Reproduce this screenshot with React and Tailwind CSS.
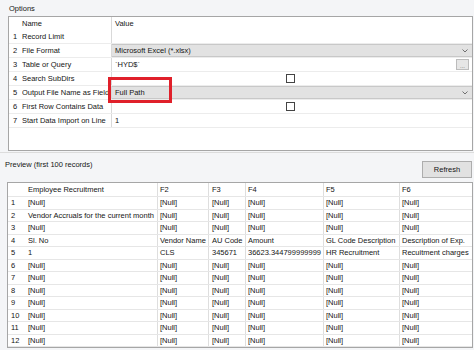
import React from "react";

const options = [
  { n: 1, name: "Record Limit", value: "" },
  { n: 2, name: "File Format", value: "Microsoft Excel (*.xlsx)", combo: true },
  { n: 3, name: "Table or Query", value: "`HYD$`", browse: true },
  { n: 4, name: "Search SubDirs", check: true },
  { n: 5, name: "Output File Name as Field", value: "Full Path", combo: true },
  { n: 6, name: "First Row Contains Data", check: true },
  { n: 7, name: "Start Data Import on Line", value: "1" },
];

const widths = ["w-[134px]", "w-[51px]", "w-[37px]", "w-[78px]", "w-[76px]", "w-[72px]"];
const pads = ["pl-[4px]", "pl-[2px]", "pl-[3px]", "pl-[2px]", "pl-[2px]", "pl-[2px]"];

const header = ["Employee Recruitment", "F2", "F3", "F4", "F5", "F6"];
const N = "[Null]";
const rows = [
  [N, N, N, N, N, N],
  ["Vendor Accruals for the current month", N, N, N, N, N],
  [N, N, N, N, N, N],
  ["Sl. No", "Vendor Name", "AU Code", "Amount", "GL Code Description", "Description of Exp."],
  ["1", "CLS", "345671", "36623.344799999999", "HR Recruitment", "Recuitment charges"],
  [N, N, N, N, N, N],
  [N, N, N, N, N, N],
  [N, N, N, N, N, N],
  [N, N, N, N, N, N],
  [N, N, N, N, N, N],
  [N, N, N, N, N, N],
  [N, N, N, N, N, N],
];

const Chevron = () => (
  <svg width="6" height="4" viewBox="0 0 6 4" className="mr-[4px]">
    <polyline points="0.5,0.5 3,3 5.5,0.5" fill="none" stroke="#707070" strokeWidth="1" />
  </svg>
);

const OptionRow = ({ o }) => (
  <div className="flex h-[14px] border-b border-[#ececec]">
    <div className="w-[13px] pl-[4px] flex items-center">{o.n}</div>
    <div className="w-[90px] flex items-center border-r border-[#d9d9d9] whitespace-nowrap overflow-hidden">
      {o.name}
    </div>
    {o.combo ? (
      <div className="flex-1 flex items-center justify-between bg-[#e2e2e2] border-y border-[#c8c8c8] pl-[3px]">
        <span>{o.value}</span>
        <Chevron />
      </div>
    ) : o.check ? (
      <div className="flex-1 flex items-center pl-[174px]">
        <div className="w-[9px] h-[9px] border border-[#444] bg-white" />
      </div>
    ) : (
      <div className="flex-1 flex items-center justify-between pl-[3px]">
        <span>{o.value}</span>
        {o.browse && (
          <div className="w-[13px] h-[11px] mr-[3px] bg-[#e6e6e6] border border-[#bcbcbc] flex items-end justify-center text-[6px] leading-[6px] text-[#666]">
            ...
          </div>
        )}
      </div>
    )}
  </div>
);

const GridRow = ({ n, cells, head }) => (
  <div className={`flex ${head ? "h-[14px]" : "h-[12.5px]"} border-b border-[#e6e6e6]`}>
    <div className="w-[16px] pl-[3px] flex items-center">{n}</div>
    {cells.map((c, i) => (
      <div
        key={i}
        className={`${widths[i]} ${pads[i]} flex items-center whitespace-nowrap overflow-hidden ${
          i < 5 ? "border-r border-[#dedede]" : ""
        }`}
      >
        {c}
      </div>
    ))}
  </div>
);

export default function App() {
  return (
    <div className="w-[474px] h-[350px] overflow-hidden bg-[#f4f5f7] font-['Liberation_Sans',Arial,sans-serif] text-[7.5px] text-[#151515] relative">
      <div className="h-[16px] pl-[9px] pt-[4px] leading-[9px]">Options</div>
      <div className="ml-[8px] w-[465px] h-[135px] border border-[#a6a6a6] bg-white">
        <div className="flex h-[13px]">
          <div className="w-[13px]" />
          <div className="w-[90px] flex items-center border-r border-[#d9d9d9]">Name</div>
          <div className="flex-1 flex items-center pl-[3px]">Value</div>
        </div>
        {options.map((o) => (
          <OptionRow key={o.n} o={o} />
        ))}
      </div>
      <div className="mt-[1px] h-px bg-[#dcdcdc]" />
      <div className="flex items-start justify-between h-[29px] pl-[5px] pr-[2px]">
        <div className="pt-[7px] leading-[9px]">Preview (first 100 records)</div>
        <div className="mt-[8px] w-[50px] h-[17px] bg-[#e1e1e1] border border-[#adadad] flex items-center justify-center">
          Refresh
        </div>
      </div>
      <div className="ml-[7px] w-[466px] border border-[#a6a6a6] bg-white">
        <GridRow n="" cells={header} head />
        {rows.map((r, i) => (
          <GridRow key={i} n={i + 1} cells={r} />
        ))}
      </div>
      <div className="absolute left-[108px] top-[77px] w-[64px] h-[26px] border-[3px] border-[#e0202a]" />
    </div>
  );
}
